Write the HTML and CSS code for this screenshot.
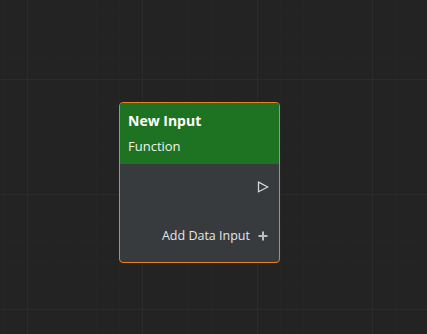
FILE: index.html
```html
<!DOCTYPE html>
<html lang="en">
<head>
  <meta charset="UTF-8">
  <title>Node Editor</title>
  <link rel="stylesheet" href="styles.css">
</head>
<body>
  <div class="canvas">
    <div class="node">
      <div class="node-header">
        <div class="node-title">New Input</div>
        <div class="node-type">Function</div>
      </div>
      <div class="node-body">
        <div class="pin-row">
          <svg class="exec-pin" width="12" height="12" viewBox="0 0 12 12">
            <path d="M1.5 1.2 L10.8 6 L1.5 10.8 Z" fill="none" stroke="#d6d6d6" stroke-width="1.3" stroke-linejoin="miter"/>
          </svg>
        </div>
        <div class="add-row">
          <span class="add-label">Add Data Input</span>
          <svg class="add-icon" width="10" height="10" viewBox="0 0 10 10">
            <path d="M5 0.5 V9.5 M0.5 5 H9.5" stroke="#bdbdbd" stroke-width="2"/>
          </svg>
        </div>
      </div>
    </div>
  </div>
</body>
</html>
```

FILE: styles.css
```css
/* General styling */
body {
  margin: 0;
  font-family: "Open Sans", "Noto Sans", sans-serif;
  background-color: #232323;
  color: #fff;
}

/* Graph canvas with grid */
.canvas {
  width: 427px;
  height: 334px;
  overflow: hidden;
  background-color: #232323;
  background-image:
    linear-gradient(to right, #2b2b2b 1px, transparent 1px),
    linear-gradient(to bottom, #2b2b2b 1px, transparent 1px),
    linear-gradient(to right, #252525 1px, transparent 1px),
    linear-gradient(to bottom, #252525 1px, transparent 1px);
  background-size: 115px 115px, 115px 115px, 23px 23px, 23px 23px;
  background-position: 27px 79px, 27px 79px, 27px 79px, 27px 79px;
  padding: 102px 0 0 119px;
  box-sizing: border-box;
}

/* Node */
.node {
  width: 161px;
  border: 1px solid #e8821e;
  border-radius: 4px;
  overflow: hidden;
  box-sizing: border-box;
  background-color: #383b3d;
}

.node-header {
  background-color: #1e7322;
  height: 61px;
  padding: 9px 8px 0 8px;
  box-sizing: border-box;
}

.node-title {
  font-size: 14px;
  font-weight: bold;
  line-height: 18px;
}

.node-type {
  font-size: 13px;
  line-height: 18px;
  margin-top: 7px;
  color: #eef3ee;
}

.node-body {
  height: 98px;
  padding: 0 10px 0 8px;
}

.pin-row {
  display: flex;
  justify-content: flex-end;
  padding-top: 17px;
  height: 12px;
}

.add-row {
  display: flex;
  justify-content: flex-end;
  align-items: center;
  margin-top: 34px;
  gap: 8px;
}

.add-label {
  font-size: 12.5px;
  line-height: 18px;
  color: #e6e6e6;
}

.add-icon {
  margin-right: 1px;
}
```
